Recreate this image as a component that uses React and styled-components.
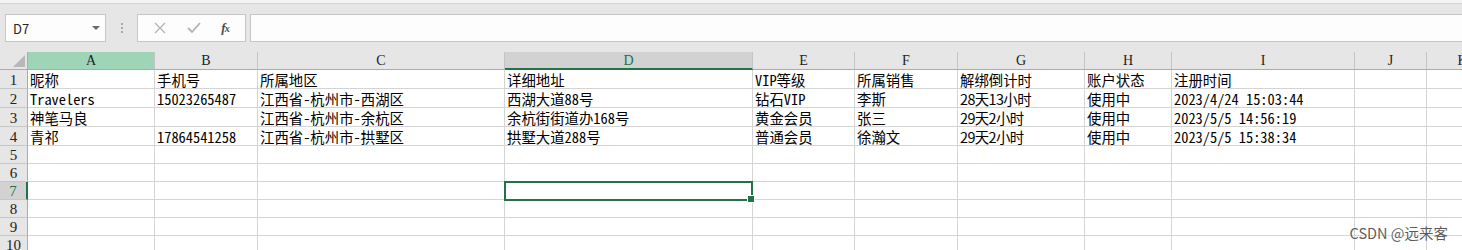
import React from 'react';
import styled, { createGlobalStyle } from 'styled-components';

const GlobalStyle = createGlobalStyle`
  html, body {
    margin: 0;
    padding: 0;
    background: #ffffff;
    overflow: hidden;
  }
  * {
    box-sizing: border-box;
  }
`;

const GREEN = '#217346';
const GRID = '#d4d4d4';
const HEAD_BG = '#e6e6e6';
const HEAD_LINE = '#ababab';

const CELL_FONT = `"Noto Sans Mono CJK SC", "Liberation Mono", "Noto Sans CJK SC", monospace`;
const SANS_FONT = `"Noto Sans CJK SC", "Liberation Sans", sans-serif`;
const HEAD_FONT = `"Liberation Serif", "Noto Sans CJK SC", serif`;

const StyledPage = styled.div`
  position: relative;
  width: 1462px;
  height: 250px;
  overflow: hidden;
`;

const StyledTopStrip = styled.div`
  height: 4px;
  background-color: #f3f3f3;
  border-bottom: 1px solid #d5d5d5;
`;

const StyledFormulaBar = styled.div`
  display: flex;
  align-items: center;
  height: 48px;
  padding: 10px 0 10px 5px;
  background-color: ${HEAD_BG};
`;

const StyledNameBox = styled.div`
  position: relative;
  display: flex;
  align-items: center;
  width: 101px;
  height: 28px;
  padding-left: 7px;
  background-color: #fdfdfd;
  border: 1px solid #c6c6c6;
  font-family: ${SANS_FONT};
  font-size: 13px;
  color: #262626;
`;

const StyledCaret = styled.span`
  position: absolute;
  right: 5px;
  top: 11px;
  width: 0;
  height: 0;
  border-left: 4px solid transparent;
  border-right: 4px solid transparent;
  border-top: 4px solid #6b6b6b;
`;

const StyledGrip = styled.div`
  display: flex;
  flex-direction: column;
  justify-content: center;
  gap: 2px;
  width: 31px;
  align-items: center;
  span {
    width: 2px;
    height: 2px;
    background-color: #a8a8a8;
  }
`;

const StyledButtonsBox = styled.div`
  display: flex;
  align-items: center;
  justify-content: space-around;
  width: 109px;
  height: 28px;
  padding: 0 6px;
  background-color: #fdfdfd;
  border: 1px solid #c6c6c6;
`;

const StyledFx = styled.span`
  font-family: "Liberation Serif", serif;
  font-style: italic;
  font-weight: bold;
  font-size: 13px;
  color: #4a4a4a;
  letter-spacing: -1px;
  small {
    font-size: 10px;
  }
`;

const StyledFormulaInput = styled.div`
  flex: 1;
  height: 28px;
  margin-left: 4px;
  margin-right: -2px;
  background-color: #fdfdfd;
  border: 1px solid #c6c6c6;
`;

const StyledGrid = styled.div`
  display: grid;
  grid-template-columns: ${({ $cols }) => $cols};
  grid-auto-rows: auto;
`;

const StyledCorner = styled.div`
  position: relative;
  height: 18px;
  background-color: ${HEAD_BG};
  border-right: 1px solid ${HEAD_LINE};
  border-bottom: 1px solid ${HEAD_LINE};
  &::after {
    content: '';
    position: absolute;
    right: 2px;
    bottom: 2px;
    width: 0;
    height: 0;
    border-left: 12px solid transparent;
    border-bottom: 12px solid #b7b7b7;
  }
`;

const StyledColHead = styled.div`
  display: flex;
  align-items: center;
  justify-content: center;
  height: 18px;
  padding-top: 1px;
  line-height: 16px;
  background-color: ${({ $state }) =>
    $state === 'active' ? '#d2d2d2' : $state === 'marked' ? '#9fd5b7' : HEAD_BG};
  border-right: 1px solid #c3c3c3;
  border-bottom: ${({ $state }) =>
    $state === 'active' ? `2px solid ${GREEN}` : `1px solid ${HEAD_LINE}`};
  font-family: ${HEAD_FONT};
  font-size: 14px;
  color: ${({ $state }) => ($state === 'active' ? GREEN : '#222')};
`;

const StyledRowHead = styled.div`
  display: flex;
  align-items: center;
  justify-content: center;
  height: ${({ $h }) => $h}px;
  padding-top: 1px;
  line-height: 16px;
  background-color: ${({ $active }) => ($active ? '#d2d2d2' : HEAD_BG)};
  border-right: ${({ $active }) => ($active ? `2px solid ${GREEN}` : `1px solid ${HEAD_LINE}`)};
  border-bottom: 1px solid #c6c6c6;
  font-family: ${HEAD_FONT};
  font-size: 15px;
  color: ${({ $active }) => ($active ? GREEN : '#222')};
`;

const StyledCell = styled.div`
  position: relative;
  display: flex;
  align-items: center;
  height: ${({ $h }) => $h}px;
  padding: 1px 0 0 2px;
  line-height: 16px;
  border-right: 1px solid ${GRID};
  border-bottom: 1px solid ${GRID};
  font-family: ${({ $sans }) => ($sans ? SANS_FONT : CELL_FONT)};
  font-size: 14.4px;
  letter-spacing: ${({ $sans }) => ($sans ? '-0.6px' : '0')};
  color: #000;
  white-space: nowrap;
  overflow: visible;
`;

const StyledSelection = styled.div`
  position: absolute;
  top: -1px;
  left: -1px;
  right: -1px;
  bottom: -2px;
  border: 2px solid ${GREEN};
  z-index: 2;
  &::after {
    content: '';
    position: absolute;
    right: -4px;
    bottom: -4px;
    width: 6px;
    height: 6px;
    background-color: ${GREEN};
    border: 1px solid #fff;
  }
`;

const StyledWatermark = styled.div`
  position: absolute;
  right: 14px;
  top: 224px;
  line-height: 18px;
  font-family: ${SANS_FONT};
  font-size: 14.5px;
  color: rgba(60, 60, 60, 0.85);
  text-shadow: 0 0 2px #fff, 0 0 2px #fff;
  z-index: 5;
`;

const columns = ['A', 'B', 'C', 'D', 'E', 'F', 'G', 'H', 'I', 'J', 'K'];
const widths = [127, 103, 247, 248, 102, 103, 127, 87, 183, 72, 72];

const data = [
  ['昵称', '手机号', '所属地区', '详细地址', 'VIP等级', '所属销售', '解绑倒计时', '账户状态', '注册时间'],
  ['Travelers', '15023265487', '江西省-杭州市-西湖区', '西湖大道88号', '钻石VIP', '李斯', '28天13小时', '使用中', '2023/4/24 15:03:44'],
  ['神笔马良', '', '江西省-杭州市-余杭区', '余杭街街道办168号', '黄金会员', '张三', '29天2小时', '使用中', '2023/5/5 14:56:19'],
  ['青祁', '17864541258', '江西省-杭州市-拱墅区', '拱墅大道288号', '普通会员', '徐瀚文', '29天2小时', '使用中', '2023/5/5 15:38:34'],
];

const ROW_COUNT = 11;
const ACTIVE_ROW = 7;
const ACTIVE_COL = 3;

function XIcon() {
  return (
    <svg width="12" height="12" viewBox="0 0 12 12">
      <path d="M1 1 L11 11 M11 1 L1 11" stroke="#b3b3b3" strokeWidth="1.3" fill="none" />
    </svg>
  );
}

function CheckIcon() {
  return (
    <svg width="14" height="12" viewBox="0 0 14 12">
      <path d="M1 6 L5 10 L13 1" stroke="#b3b3b3" strokeWidth="1.8" fill="none" />
    </svg>
  );
}

export default function App() {
  const cols = `28px ${widths.map((w) => `${w}px`).join(' ')}`;

  return (
    <StyledPage>
      <GlobalStyle />
      <StyledTopStrip />
      <StyledFormulaBar>
        <StyledNameBox>
          D7
          <StyledCaret />
        </StyledNameBox>
        <StyledGrip>
          <span />
          <span />
          <span />
        </StyledGrip>
        <StyledButtonsBox>
          <XIcon />
          <CheckIcon />
          <StyledFx>
            f<small>x</small>
          </StyledFx>
        </StyledButtonsBox>
        <StyledFormulaInput />
      </StyledFormulaBar>

      <StyledGrid $cols={cols}>
        <StyledCorner />
        {columns.map((c, i) => (
          <StyledColHead key={c} $state={i === ACTIVE_COL ? 'active' : i === 0 ? 'marked' : ''}>
            {c}
          </StyledColHead>
        ))}

        {Array.from({ length: ROW_COUNT }, (_, r) => {
          const rowNo = r + 1;
          const h = rowNo <= 4 ? 19 : 18;
          const values = data[r] || [];
          return (
            <React.Fragment key={rowNo}>
              <StyledRowHead $h={h} $active={rowNo === ACTIVE_ROW}>
                {rowNo}
              </StyledRowHead>
              {columns.map((c, ci) => (
                <StyledCell key={c} $h={h} $sans={ci === 6 && rowNo > 1}>
                  {values[ci] || ''}
                  {rowNo === ACTIVE_ROW && ci === ACTIVE_COL && <StyledSelection />}
                </StyledCell>
              ))}
            </React.Fragment>
          );
        })}
      </StyledGrid>

      <StyledWatermark>CSDN @远来客</StyledWatermark>
    </StyledPage>
  );
}
